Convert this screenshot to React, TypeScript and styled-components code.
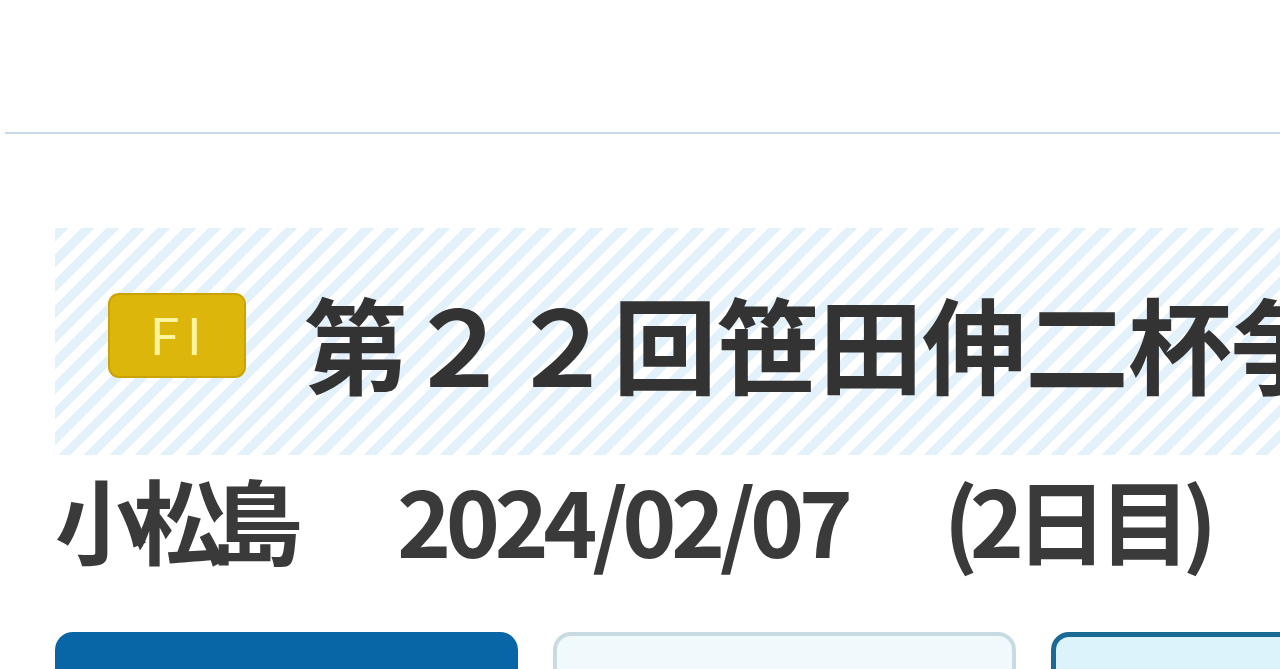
import styled, { createGlobalStyle } from 'styled-components';

const GlobalStyle = createGlobalStyle`
  html, body {
    margin: 0;
    padding: 0;
    background: #ffffff;
    overflow: hidden;
  }
  body {
    font-family: "Noto Sans CJK JP", "Noto Sans", sans-serif;
  }
`;

const Page = styled.div`
  width: 1280px;
  height: 669px;
  overflow: hidden;
  display: flex;
  flex-direction: column;
`;

const Header = styled.div`
  height: 132px;
  margin-left: 5px;
  border-bottom: 2px solid #c9d9e8;
  flex-shrink: 0;
`;

const Content = styled.div`
  padding-left: 55px;
  display: flex;
  flex-direction: column;
`;

const Banner = styled.div`
  margin-top: 94px;
  height: 227px;
  display: flex;
  align-items: center;
  gap: 58px;
  padding-left: 53px;
  white-space: nowrap;
  overflow: hidden;
  background: repeating-linear-gradient(
    -45deg,
    #ffffff 0px,
    #ffffff 9px,
    #e3f1fb 9px,
    #e3f1fb 18px
  );
`;

const GradeBadge = styled.div`
  flex-shrink: 0;
  width: 138px;
  height: 85px;
  box-sizing: border-box;
  border: 2px solid #caa406;
  border-radius: 11px;
  background: #ddb60c;
  display: flex;
  align-items: center;
  justify-content: center;
  margin-top: -12px;
  padding: 5px 0 0 6px;
  color: #fff59e;
  font-family: Roboto, "Liberation Sans", sans-serif;
  font-weight: 400;
  font-size: 52px;
  letter-spacing: 8px;
  line-height: 1;
`;

const Title = styled.h1`
  margin: 0;
  font-size: 104px;
  font-weight: 700;
  color: #333333;
  line-height: 1;
  letter-spacing: -1px;
`;

const InfoLine = styled.div`
  display: flex;
  align-items: center;
  height: 125px;
  font-size: 92px;
  font-weight: 700;
  color: #3a3a3a;
  white-space: nowrap;
  line-height: 1;
`;

const InfoPart = styled.span<{ $spacing: number; $gapBefore?: number }>`
  letter-spacing: ${(p) => p.$spacing}px;
  margin-left: ${(p) => p.$gapBefore ?? 0}px;
`;

const Tabs = styled.div`
  margin-top: 52px;
  display: flex;
  gap: 35px;
`;

const Tab = styled.div<{ $variant: 'active' | 'plain' | 'outline' }>`
  flex-shrink: 0;
  width: 463px;
  height: 80px;
  box-sizing: border-box;
  border-radius: 18px 18px 0 0;
  background: ${(p) =>
    p.$variant === 'active' ? '#0866a6' : p.$variant === 'plain' ? '#f0fafc' : '#ddf3fb'};
  border: ${(p) =>
    p.$variant === 'active'
      ? 'none'
      : p.$variant === 'plain'
      ? '4px solid #c8dbe3'
      : '5px solid #1b6a95'};
`;

export default function App() {
  return (
    <Page>
      <GlobalStyle />
      <Header />
      <Content>
        <Banner>
          <GradeBadge>FI</GradeBadge>
          <Title>第２２回笹田伸二杯争奪戦</Title>
        </Banner>
        <InfoLine>
          <InfoPart $spacing={-14}>小松島</InfoPart>
          <InfoPart $spacing={-5.5} $gapBefore={108}>2024/02/07</InfoPart>
          <InfoPart $spacing={-8.5} $gapBefore={96}>(2日目)</InfoPart>
        </InfoLine>
        <Tabs>
          <Tab $variant="active" />
          <Tab $variant="plain" />
          <Tab $variant="outline" />
        </Tabs>
      </Content>
    </Page>
  );
}
